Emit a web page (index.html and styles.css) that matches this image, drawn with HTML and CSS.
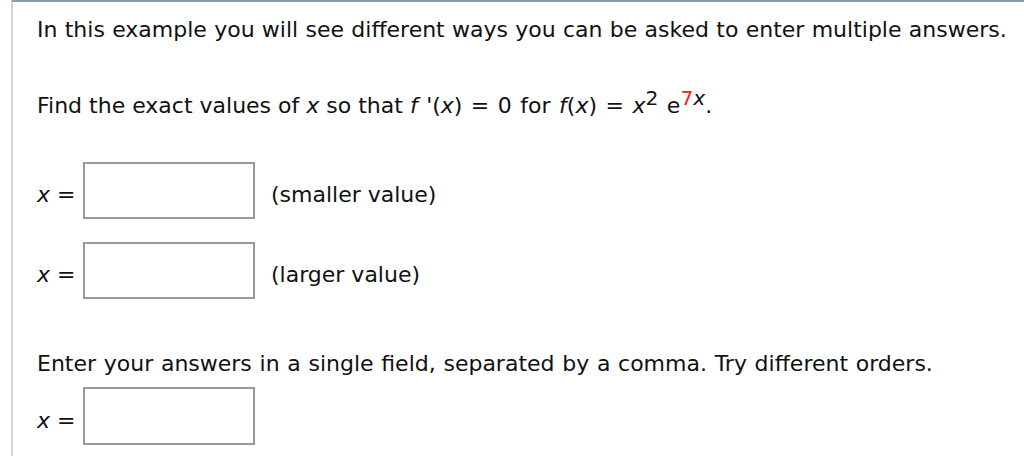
FILE: index.html
```html
<!DOCTYPE html>
<html>
<head>
<meta charset="utf-8">
<link rel="stylesheet" href="styles.css">
</head>
<body>
<div class="page">
  <p class="line intro">In this example you will see different ways you can be asked to enter multiple answers.</p>
  <p class="line question">Find the exact values of <i>x</i> so that <span class="formula"><i>f</i> '(<i>x</i>) = 0 for <i>f</i>(<i>x</i>) = <i>x</i><sup>2</sup> e<sup><span class="red">7</span><i>x</i></sup>.</span></p>
  <div class="answer first">
    <span class="lbl"><i>x</i> =</span>
    <span class="box"></span>
    <span class="hint">(smaller value)</span>
  </div>
  <div class="answer second">
    <span class="lbl"><i>x</i> =</span>
    <span class="box"></span>
    <span class="hint">(larger value)</span>
  </div>
  <p class="line single">Enter your answers in a single field, separated by a comma. Try different orders.</p>
  <div class="answer third">
    <span class="lbl"><i>x</i> =</span>
    <span class="box"></span>
  </div>
</div>
</body>
</html>
```
FILE: styles.css
```css
html, body {
  margin: 0;
  padding: 0;
  background: #fff;
}
body {
  font-family: "DejaVu Sans", Verdana, sans-serif;
  color: #111;
  font-size: 22px;
}
.page {
  border-top: 2px solid #8b9bab;
  margin-left: 11px;
  border-left: 2px solid #d3d3d3;
  height: 456px;
  padding-left: 24px;
  padding-top: 15px;
  box-sizing: border-box;
}
.line {
  margin: 0;
  line-height: 26px;
  white-space: nowrap;
}
.intro { word-spacing: 0.3px; }
.question { margin-top: 50px; }
.formula {
  word-spacing: 1.5px;
}
sup {
  font-size: 0.92em;
  line-height: 0;
  vertical-align: 8px;
}
.red { color: #e8231f; }
.answer {
  display: flex;
  align-items: flex-end;
}
.first { margin-top: 43px; }
.second { margin-top: 23px; }
.single {
  margin-top: 52px;
  word-spacing: 0.7px;
}
.third { margin-top: 10px; }
.lbl {
  width: 46px;
  margin-bottom: 11px;
  line-height: 26px;
}
.box {
  width: 168px;
  height: 53px;
  border: 2px solid #9a9a9a;
  background: #fff;
}
.third .box {
  height: 54px;
}
.hint {
  margin-left: 16px;
  margin-bottom: 11px;
  line-height: 26px;
}
```
